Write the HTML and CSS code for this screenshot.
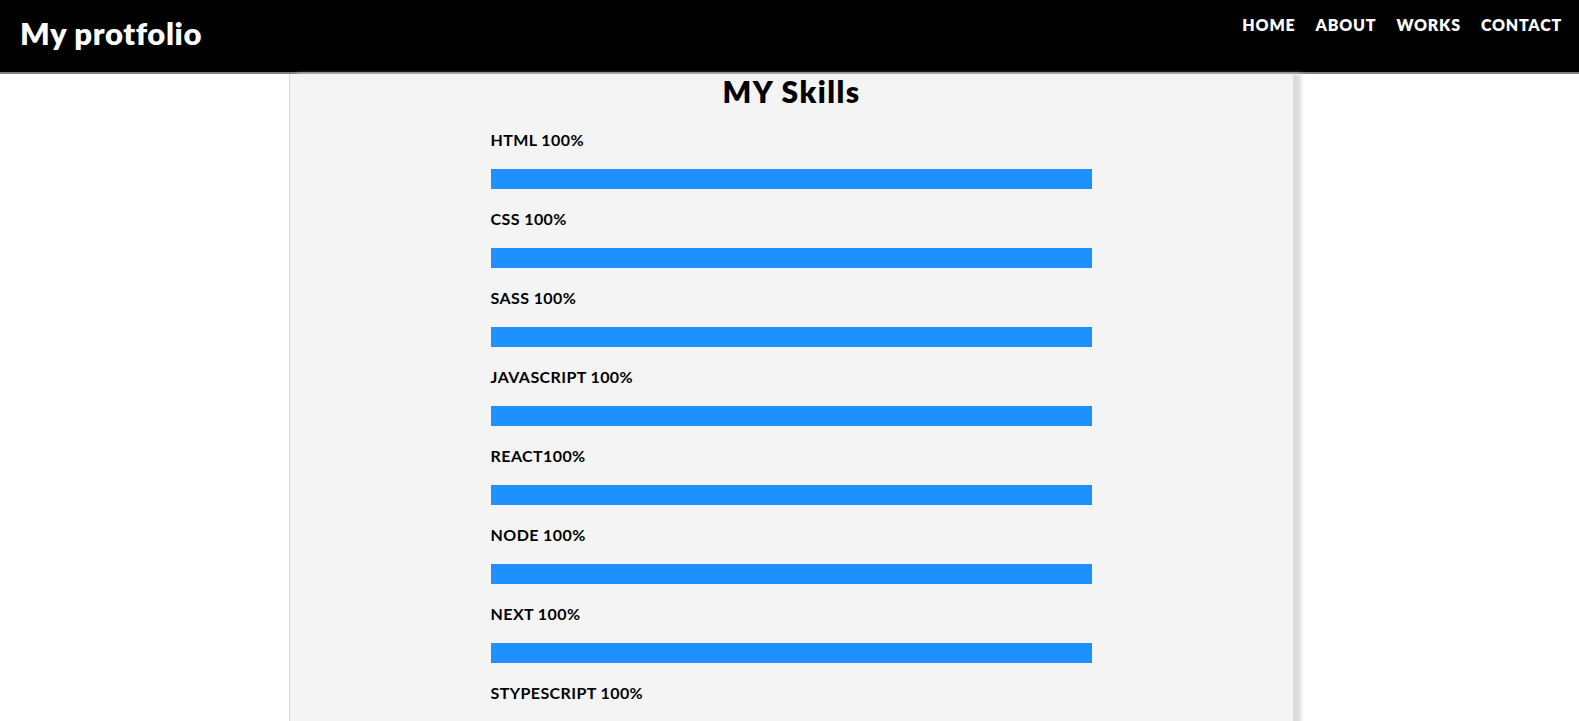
FILE: index.html
```html
<!DOCTYPE html>
<html lang="en">
<head>
<meta charset="utf-8">
<title>My protfolio</title>
<link rel="stylesheet" href="styles.css">
</head>
<body>
<header class="topbar">
  <h1 class="brand">My protfolio</h1>
  <nav class="nav">
    <a href="#" class="nav-link">HOME</a>
    <a href="#" class="nav-link">ABOUT</a>
    <a href="#" class="nav-link">WORKS</a>
    <a href="#" class="nav-link">CONTACT</a>
  </nav>
</header>
<main class="page">
  <section class="card">
    <h2 class="card-title">MY Skills</h2>
    <div class="skills">
      <div class="skill"><p class="skill-label">HTML 100%</p><div class="bar"><div class="bar-fill" style="width:100%"></div></div></div>
      <div class="skill"><p class="skill-label">CSS 100%</p><div class="bar"><div class="bar-fill" style="width:100%"></div></div></div>
      <div class="skill"><p class="skill-label">SASS 100%</p><div class="bar"><div class="bar-fill" style="width:100%"></div></div></div>
      <div class="skill"><p class="skill-label">JAVASCRIPT 100%</p><div class="bar"><div class="bar-fill" style="width:100%"></div></div></div>
      <div class="skill"><p class="skill-label">REACT100%</p><div class="bar"><div class="bar-fill" style="width:100%"></div></div></div>
      <div class="skill"><p class="skill-label">NODE 100%</p><div class="bar"><div class="bar-fill" style="width:100%"></div></div></div>
      <div class="skill"><p class="skill-label">NEXT 100%</p><div class="bar"><div class="bar-fill" style="width:100%"></div></div></div>
      <div class="skill"><p class="skill-label">STYPESCRIPT 100%</p><div class="bar"><div class="bar-fill" style="width:100%"></div></div></div>
    </div>
  </section>
</main>
</body>
</html>
```
FILE: styles.css
```css
* { box-sizing: border-box; }
html, body {
  margin: 0;
  padding: 0;
  background: #ffffff;
  font-family: Lato, "Open Sans", "Liberation Sans", sans-serif;
  color: #000;
}
.topbar {
  display: flex;
  justify-content: space-between;
  align-items: flex-start;
  height: 74px;
  background: #000;
  border-bottom: 2px solid #7f7f7f;
  padding: 0 17px 0 20px;
}
.brand {
  margin: 0;
  padding-top: 15px;
  font-size: 31px;
  line-height: 36px;
  font-weight: 800;
  letter-spacing: 0.6px;
  color: #fff;
}
.nav {
  display: flex;
  gap: 20px;
  padding-top: 15px;
}
.nav-link {
  font-size: 16px;
  line-height: 20px;
  font-weight: 800;
  letter-spacing: 0.8px;
  color: #fff;
  text-decoration: none;
}
.page {
  display: flex;
  justify-content: center;
  padding-left: 3px;
}
.card {
  width: 1004px;
  min-height: 660px;
  background: #f4f4f4;
  border-left: 1px solid #dcdcdc;
  box-shadow: 8px 0 4px #dcdcdc;
  display: flex;
  flex-direction: column;
  align-items: center;
}
.card-title {
  margin: 0;
  font-size: 30px;
  line-height: 34px;
  font-weight: 800;
  letter-spacing: 1.5px;
}
.skills {
  width: 60%;
  padding-top: 21.5px;
}
.skill-label {
  margin: 0 0 19.5px;
  font-size: 16px;
  line-height: 20px;
  font-weight: 700;
  letter-spacing: 0.4px;
}
.bar {
  height: 20px;
  margin-bottom: 19.5px;
}
.bar-fill {
  height: 100%;
  background: #1e90ff;
}
```
